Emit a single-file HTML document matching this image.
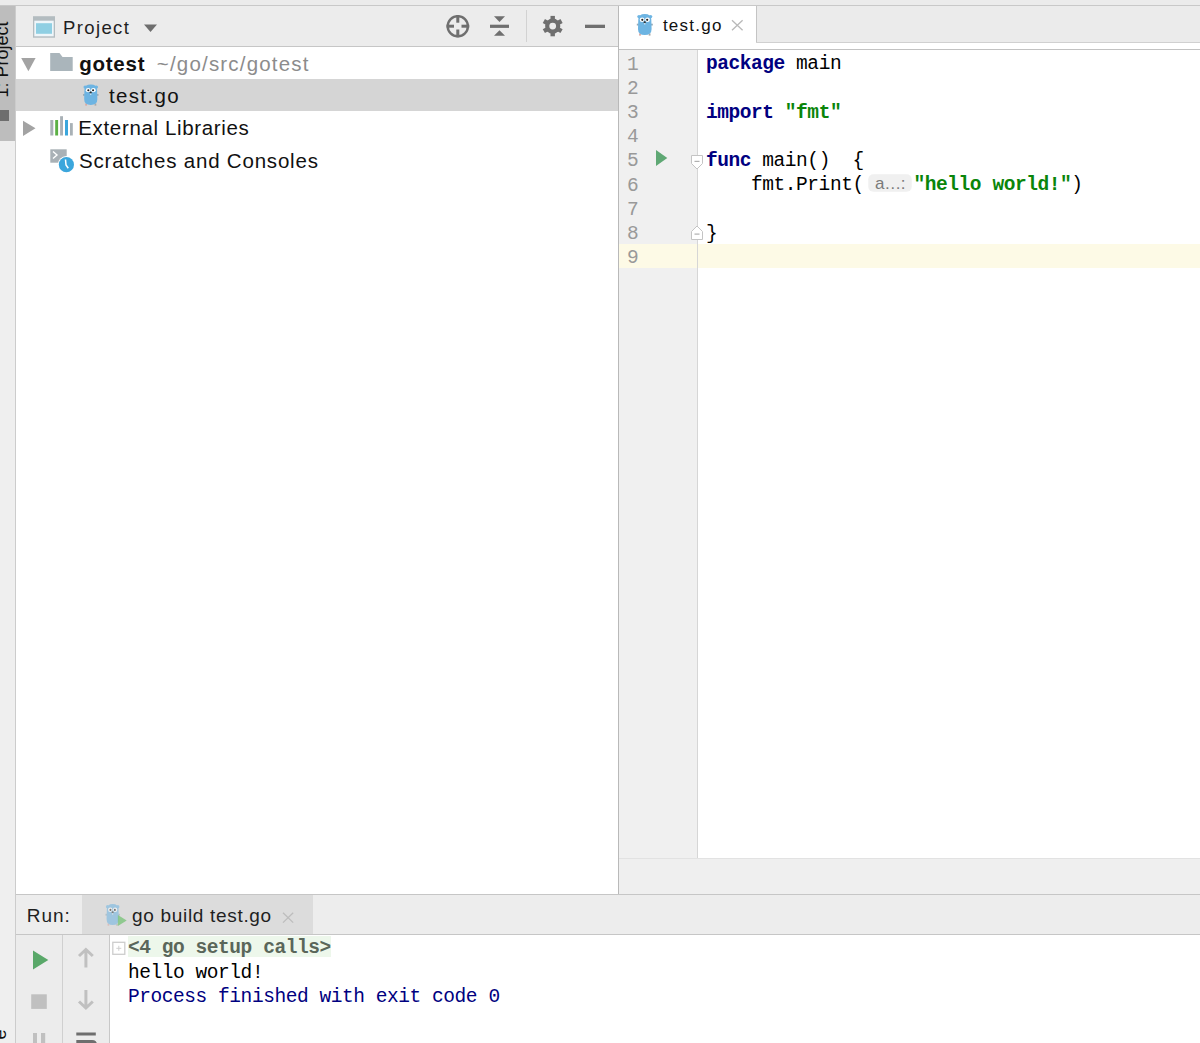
<!DOCTYPE html>
<html><head><meta charset="utf-8">
<style>
*{margin:0;padding:0;box-sizing:border-box}
html,body{width:1200px;height:1043px;overflow:hidden;background:#ececec;font-family:"Liberation Sans",sans-serif}
.a{position:absolute}
.t{font-family:"Liberation Sans",sans-serif;white-space:pre;line-height:1}
.mono{font-family:"Liberation Mono",monospace;font-size:19.5px;letter-spacing:-0.44px;white-space:pre;line-height:24.2px}
.kw{color:#000080;font-weight:bold}
.str{color:#0a850a;font-weight:bold}
svg{position:absolute;overflow:visible}
</style></head><body>
<!-- top strip -->
<div class="a" style="left:0;top:0;width:1200px;height:5px;background:#ebebeb"></div>
<div class="a" style="left:0;top:5px;width:1200px;height:1px;background:#c8c8c8"></div>

<!-- left stripe -->
<div class="a" style="left:0;top:6px;width:15px;height:1037px;background:#efefef"></div>
<div class="a" style="left:0;top:6px;width:15px;height:135px;background:#bdbdbd"></div>
<div class="a" style="left:15px;top:6px;width:1px;height:1037px;background:#cccccc"></div>
<div class="a t" style="left:0;top:0;font-size:18px;letter-spacing:0px;color:#111;transform-origin:0 0;transform:translate(-7px,97.5px) rotate(-90deg)">1: Project</div>
<div class="a t" style="left:0;top:0;font-size:18px;color:#111;transform-origin:0 0;transform:translate(-9px,1039.5px) rotate(-90deg)">e</div>
<div class="a" style="left:0;top:110px;width:9px;height:11px;background:#6e6e6e"></div>

<!-- project panel -->
<div class="a" style="left:16px;top:6px;width:602px;height:40px;background:#ececec"></div>
<div class="a" style="left:16px;top:46px;width:602px;height:1px;background:#c6c6c6"></div>
<div class="a" style="left:16px;top:47px;width:602px;height:847px;background:#ffffff"></div>
<div class="a" style="left:618px;top:6px;width:1px;height:888px;background:#b9b9b9"></div>
<div class="a" style="left:16px;top:79px;width:602px;height:32px;background:#d5d5d5"></div>

<!-- project header icon -->
<svg style="left:0;top:0" width="1" height="1">
  <rect x="33" y="16.2" width="22" height="21.5" fill="#b3bcc0"/>
  <rect x="34.3" y="20.7" width="19.4" height="15.6" fill="#eef6fa"/>
  <rect x="36" y="23.2" width="16" height="10.6" fill="#8fcfe3"/>
  <!-- dropdown -->
  <path d="M144 24.5 L157 24.5 L150.5 32 Z" fill="#6e6e6e"/>
  <!-- locate -->
  <circle cx="457.8" cy="26.2" r="10.1" fill="none" stroke="#6f6f6f" stroke-width="2.4"/>
  <rect x="456.3" y="15" width="3" height="7.7" fill="#6f6f6f"/>
  <rect x="456.3" y="29.5" width="3" height="7.8" fill="#6f6f6f"/>
  <rect x="446.5" y="24.7" width="7.5" height="3" fill="#6f6f6f"/>
  <rect x="461.5" y="24.7" width="7.8" height="3" fill="#6f6f6f"/>
  <!-- collapse -->
  <path d="M494 16.3 L505 16.3 L499.5 22 Z" fill="#6f6f6f"/>
  <rect x="490" y="24.7" width="19" height="3.2" fill="#6f6f6f"/>
  <path d="M494 35.7 L505 35.7 L499.5 30.3 Z" fill="#6f6f6f"/>
  <!-- separator -->
  <rect x="526" y="10" width="1" height="32" fill="#d2d2d2"/>
  <!-- gear -->
  <g transform="translate(552.7 26.1)" fill="#6f6f6f">
    <circle r="7.6"/>
    <rect x="-2.2" y="-10.2" width="4.4" height="20.4"/>
    <rect x="-2.2" y="-10.2" width="4.4" height="20.4" transform="rotate(60)"/>
    <rect x="-2.2" y="-10.2" width="4.4" height="20.4" transform="rotate(120)"/>
    <circle r="3.4" fill="#ececec"/>
  </g>
  <!-- minimize -->
  <rect x="585" y="24.7" width="20" height="3.3" fill="#6f6f6f"/>

  <!-- tree: expand down -->
  <path d="M21.2 58 L35.6 58 L28.4 71.3 Z" fill="#a3a3a3"/>
  <!-- folder -->
  <path d="M50.2 53.1 L59.5 53.1 L62.5 57 L72.7 57 L72.7 71 L50.2 71 Z" fill="#aab5bb"/>
  <!-- expand right -->
  <path d="M23 120.7 L35.5 128.3 L23 135.9 Z" fill="#a3a3a3"/>
  <!-- libraries -->
  <rect x="50.3" y="120" width="3" height="15.5" fill="#a9b1b6"/>
  <rect x="55.2" y="120" width="2.9" height="15.5" fill="#5bb045"/>
  <rect x="60.1" y="116.2" width="2.9" height="19.3" fill="#a9b1b6"/>
  <rect x="65" y="120" width="3" height="15.5" fill="#3ba6dc"/>
  <rect x="70" y="123.1" width="2.8" height="12.4" fill="#a9b1b6"/>
  <!-- scratches -->
  <rect x="50.3" y="149.3" width="16.4" height="13.4" fill="#a9b1b6"/>
  <path d="M53 151.5 L57 155 L53 158.5" fill="none" stroke="#fff" stroke-width="1.4"/>
  <circle cx="66.4" cy="164.7" r="8.6" fill="#fff"/>
  <circle cx="66.4" cy="164.7" r="7.6" fill="#3ba6dc"/>
  <path d="M65.5 159.5 L66 165 L68.3 168.3" fill="none" stroke="#fff" stroke-width="1.5"/>
</svg>

<!-- editor -->
<div class="a" style="left:619px;top:6px;width:581px;height:888px;background:#ffffff"></div>
<div class="a" style="left:757px;top:6px;width:443px;height:36px;background:#ebebeb"></div>
<div class="a" style="left:756px;top:6px;width:1px;height:37px;background:#c4c4c4"></div>
<div class="a" style="left:756px;top:42px;width:444px;height:1px;background:#d0d0d0"></div>
<div class="a" style="left:619px;top:49px;width:581px;height:1px;background:#c2c2c2"></div>
<div class="a" style="left:619px;top:50px;width:78px;height:809px;background:#f0f0f0"></div>
<div class="a" style="left:619px;top:243.5px;width:581px;height:24.2px;background:#fdfae6"></div>
<div class="a" style="left:697px;top:50px;width:1px;height:809px;background:#d6d6d6"></div>
<div class="a" style="left:619px;top:858px;width:581px;height:1px;background:#e2e2e2"></div>
<div class="a" style="left:619px;top:859px;width:581px;height:35px;background:#efefef"></div>

<svg style="left:0;top:0" width="1" height="1">
  <!-- tab close -->
  <path d="M732 20.2 L742.6 30.3 M742.6 20.2 L732 30.3" stroke="#b9b9b9" stroke-width="1.3"/>
  <!-- gutter run -->
  <path d="M656 150 L667.3 158 L656 166 Z" fill="#5fa874"/>
  <!-- fold start -->
  <path d="M691.5 155.5 L702.5 155.5 L702.5 163.5 L697 169 L691.5 163.5 Z" fill="#fff" stroke="#c4c4c4" stroke-width="1"/>
  <rect x="694.5" y="160.8" width="5" height="1.2" fill="#b0b0b0"/>
  <!-- fold end -->
  <path d="M691.5 239.5 L702.5 239.5 L702.5 231.5 L697 226 L691.5 231.5 Z" fill="#fff" stroke="#c4c4c4" stroke-width="1"/>
  <rect x="694.5" y="233.5" width="5" height="1.2" fill="#b0b0b0"/>
  <!-- inlay box -->
  <rect x="868.3" y="174.3" width="43.4" height="17.4" rx="5" fill="#f0f0f0"/>
</svg>
<div class="a t" style="left:875px;top:174.5px;font-size:17px;color:#7a7a7a;letter-spacing:-0.3px">a…:</div>

<!-- gutter numbers -->
<div class="a mono" style="left:627px;top:52.5px;color:#999999">1
2
3
4
5
6
7
8
9</div>
<div class="a mono" style="left:706px;top:52.3px;color:#000"><span class="kw">package</span> main

<span class="kw">import</span> <span class="str">"fmt"</span>

<span class="kw">func</span> main()  {
    fmt.Print(<span style="display:inline-block;width:49.9px"></span><span class="str">"hello world!"</span>)

}</div>

<!-- run panel -->
<div class="a" style="left:16px;top:894px;width:1184px;height:1px;background:#c6c6c6"></div>
<div class="a" style="left:16px;top:895px;width:1184px;height:39px;background:#ededed"></div>
<div class="a" style="left:82px;top:895px;width:231px;height:39px;background:#dcdcdc"></div>
<div class="a" style="left:16px;top:934px;width:1184px;height:1px;background:#c6c6c6"></div>
<div class="a" style="left:16px;top:935px;width:93px;height:108px;background:#ececec"></div>
<div class="a" style="left:62px;top:935px;width:1px;height:108px;background:#d0d0d0"></div>
<div class="a" style="left:109px;top:935px;width:1px;height:108px;background:#c8c8c8"></div>
<div class="a" style="left:110px;top:935px;width:1090px;height:108px;background:#ffffff"></div>
<div class="a" style="left:127.7px;top:936px;width:203px;height:21.3px;background:#edf7eb"></div>

<svg style="left:0;top:0" width="1" height="1">
  <!-- run tab close -->
  <path d="M283 912.8 L293.2 922.6 M293.2 912.8 L283 922.6" stroke="#bdbdbd" stroke-width="1.3"/>
  <!-- play -->
  <path d="M33 950.4 L48.3 959.9 L33 969.4 Z" fill="#59a869"/>
  <!-- stop -->
  <rect x="31.2" y="994.3" width="15.6" height="14.6" fill="#c0c0c0"/>
  <!-- pause -->
  <rect x="33" y="1033" width="4" height="12" fill="#c0c0c0"/>
  <rect x="41" y="1033" width="4.2" height="12" fill="#c0c0c0"/>
  <!-- up -->
  <path d="M85.9 949.5 L85.9 967.6 M79 956 L85.9 949.5 L92.8 956" fill="none" stroke="#c0c0c0" stroke-width="3"/>
  <!-- down -->
  <path d="M85.9 989.9 L85.9 1008 M79 1001.5 L85.9 1008 L92.8 1001.5" fill="none" stroke="#c0c0c0" stroke-width="3"/>
  <!-- soft wrap -->
  <rect x="76.3" y="1032.5" width="19.5" height="3" fill="#6e6e6e"/>
  <path d="M76.3 1040 L92 1040 Q97 1040 97 1045 L76.3 1045 Z" fill="#6e6e6e"/>
  <!-- fold box -->
  <rect x="112.8" y="942.3" width="12" height="12" fill="#fff" stroke="#cdcdcd" stroke-width="1.3"/>
  <path d="M118.8 945.8 L118.8 950.8 M116.3 948.3 L121.3 948.3" stroke="#cfcfcf" stroke-width="1"/>
</svg>

<div class="a mono" style="left:128px;top:936.4px;color:#000"><span style="color:#5a665a;font-weight:bold">&lt;4 go setup calls&gt;</span>
hello world!
<span style="color:#000080">Process finished with exit code 0</span></div>

<svg style="left:0;top:0" width="1" height="1">
  <defs>
    <g id="gopher">
      <circle cx="2.2" cy="3.2" r="1.7" fill="#6fb6e4"/>
      <circle cx="13.8" cy="3.2" r="1.7" fill="#6fb6e4"/>
      <rect x="0" y="10.3" width="2" height="1.8" fill="#9aa9b4"/>
      <rect x="14" y="10.3" width="2" height="1.8" fill="#9aa9b4"/>
      <rect x="2.3" y="20" width="1.8" height="2.2" fill="#d9a7a0"/>
      <rect x="11.9" y="20" width="1.8" height="2.2" fill="#a9a9a9"/>
      <path d="M1.5 6 Q1.5 0.5 8 0.5 Q14.5 0.5 14.5 6 L14.8 15.5 Q14.8 21.6 8 21.6 Q1.2 21.6 1.2 15.5 Z" fill="#6db4e2"/>
      <ellipse cx="5.3" cy="6.3" rx="2.4" ry="2.2" fill="#fff"/>
      <ellipse cx="10.7" cy="6.3" rx="2.4" ry="2.2" fill="#fff"/>
      <circle cx="5.5" cy="6.4" r="1.1" fill="#222"/>
      <circle cx="10.4" cy="6.4" r="1.1" fill="#222"/>
      <ellipse cx="7.9" cy="8.8" rx="1.2" ry="1" fill="#333"/>
      <rect x="7.3" y="9.8" width="1.3" height="1.2" fill="#e8f4fb"/>
    </g>
  </defs>
  <use href="#gopher" transform="translate(636.8 13.4)"/>
  <use href="#gopher" transform="translate(83 84) scale(0.97 0.975)"/>
  <g opacity="0.55"><use href="#gopher" transform="translate(105.5 903.5) scale(0.9 1)"/></g>
  <path d="M117.9 915 L126.7 920.5 L117.9 926 Z" fill="#7cc47c" opacity="0.8"/>
</svg>
<div class="a t" style="left:63.00px;top:19.10px;font-size:18.5px;font-weight:400;letter-spacing:1.383px;color:#1f1f1f">Project</div>
<div class="a t" style="left:79.20px;top:54.00px;font-size:20.5px;font-weight:700;letter-spacing:0.760px;color:#111">gotest</div>
<div class="a t" style="left:156.80px;top:54.20px;font-size:20.5px;font-weight:400;letter-spacing:1.186px;color:#8c8c8c">~/go/src/gotest</div>
<div class="a t" style="left:109.00px;top:86.00px;font-size:20.5px;font-weight:400;letter-spacing:1.333px;color:#111">test.go</div>
<div class="a t" style="left:78.30px;top:118.20px;font-size:20.5px;font-weight:400;letter-spacing:0.647px;color:#111">External Libraries</div>
<div class="a t" style="left:79.00px;top:150.70px;font-size:20.5px;font-weight:400;letter-spacing:0.795px;color:#111">Scratches and Consoles</div>
<div class="a t" style="left:662.90px;top:16.50px;font-size:17px;font-weight:400;letter-spacing:1.250px;color:#111">test.go</div>
<div class="a t" style="left:26.70px;top:905.80px;font-size:19px;font-weight:400;letter-spacing:1.000px;color:#1f1f1f">Run:</div>
<div class="a t" style="left:132.10px;top:905.80px;font-size:19px;font-weight:400;letter-spacing:0.680px;color:#1f1f1f">go build test.go</div>
</body></html>
